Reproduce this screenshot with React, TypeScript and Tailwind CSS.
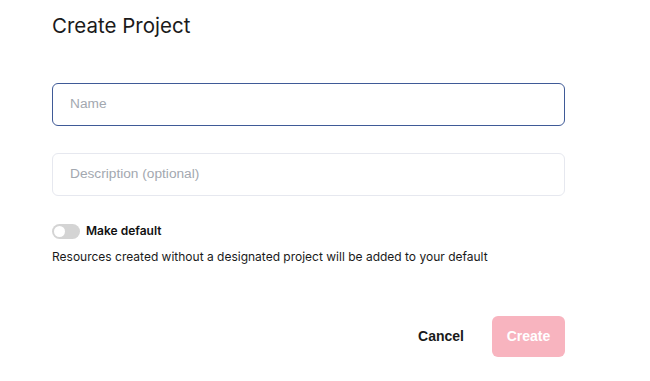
export default function App() {
  return (
    <div className="w-[650px] h-[381px] bg-white" style={{ fontFamily: 'Inter, "Liberation Sans", sans-serif' }}>
      <div className="pl-[52px] pr-[85px] pt-[13px]">
        <h2 className="text-[20.5px] leading-[26px] text-[#1a1a1a] font-normal">Create Project</h2>

        <div className="mt-[44px] flex flex-col gap-[27px]">
          <input
            type="text"
            placeholder="Name"
            className="w-full h-[43px] rounded-md border border-[#3f5a97] px-[17px] pb-[2px] text-[13.7px] outline-none placeholder:text-[#a3a8b0]"
            style={{ fontFamily: '"Liberation Sans", Arial, sans-serif' }}
          />
          <input
            type="text"
            placeholder="Description (optional)"
            className="w-full h-[43px] rounded-md border border-[#e6e8ef] px-[17px] pb-[2px] text-[13.7px] outline-none placeholder:text-[#a3a8b0]"
            style={{ fontFamily: '"Liberation Sans", Arial, sans-serif' }}
          />
        </div>

        <div className="mt-[26px] flex items-center gap-[6px]">
          <span className="relative inline-block w-[28px] h-[15px] rounded-full bg-[#d4d4d4]">
            <span className="absolute left-[2px] top-[2px] w-[11px] h-[11px] rounded-full bg-white" />
          </span>
          <span className="text-[12px] font-semibold text-[#111]">Make default</span>
        </div>
        <p className="mt-[8px] text-[12px] text-[#1a1a1a]">
          Resources created without a designated project will be added to your default
        </p>

        <div className="mt-[50px] flex justify-end items-center gap-[28px]">
          <button className="text-[14px] font-bold text-[#1a1a1a]" style={{ fontFamily: '"Liberation Sans", Arial, sans-serif' }}>
            Cancel
          </button>
          <button
            disabled
            className="w-[73px] h-[41px] rounded-md bg-[#f8b4bf] text-white text-[14px] font-bold"
            style={{ fontFamily: '"Liberation Sans", Arial, sans-serif' }}
          >
            Create
          </button>
        </div>
      </div>
    </div>
  );
}
